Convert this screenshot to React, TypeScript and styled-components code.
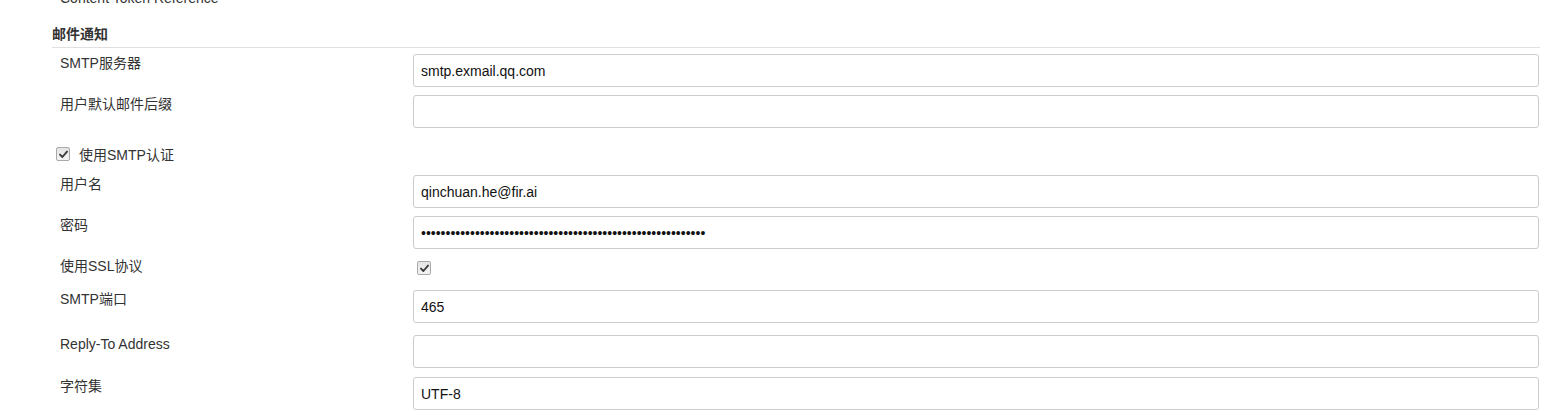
import React from "react";
import styled, { createGlobalStyle } from "styled-components";

const GlobalStyle = createGlobalStyle`
  html, body {
    margin: 0;
    padding: 0;
    background: #fff;
    overflow: hidden;
  }
  body {
    font-family: "Liberation Sans", Arial, "Noto Sans CJK SC", sans-serif;
    font-size: 14px;
    color: #333;
  }
`;

const fields = [
  { label: "SMTP服务器", value: "smtp.exmail.qq.com", gap: 6 },
  { label: "用户默认邮件后缀", value: "", gap: 8 },
];

const authFields = [
  { label: "用户名", value: "qinchuan.he@fir.ai", gap: 11 },
  { label: "密码", value: "•".repeat(58), gap: 8, password: true },
];

const tailFields = [
  { label: "SMTP端口", value: "465", gap: 8 },
  { label: "Reply-To Address", value: "", gap: 12 },
  { label: "字符集", value: "UTF-8", gap: 9 },
];

export default function App() {
  return (
    <>
      <GlobalStyle />
      <StyledPage>
        <StyledPrevLink>Content Token Reference</StyledPrevLink>
        <StyledSectionHeader>邮件通知</StyledSectionHeader>

        {fields.map((f) => (
          <FieldRow key={f.label} {...f} />
        ))}

        <StyledCheckRow $gap={18}>
          <CheckBox />
          <span className="checkLabel">使用SMTP认证</span>
        </StyledCheckRow>

        {authFields.map((f) => (
          <FieldRow key={f.label} {...f} />
        ))}

        <StyledRow $gap={8} $height={25}>
          <StyledLabel>使用SSL协议</StyledLabel>
          <StyledCheckCell>
            <CheckBox />
          </StyledCheckCell>
        </StyledRow>

        {tailFields.map((f) => (
          <FieldRow key={f.label} {...f} />
        ))}
      </StyledPage>
    </>
  );
}

type FieldProps = {
  label: string;
  value: string;
  gap: number;
  password?: boolean;
};

function FieldRow({ label, value, gap }: FieldProps) {
  return (
    <StyledRow $gap={gap}>
      <StyledLabel>{label}</StyledLabel>
      <StyledInput type="text" defaultValue={value} spellCheck={false} />
    </StyledRow>
  );
}

function CheckBox() {
  return (
    <StyledCheck>
      <svg width="9" height="9" viewBox="0 0 9 9">
        <path
          d="M1 4.6 L3.4 7 L8 1.6"
          fill="none"
          stroke="#3c3c3c"
          strokeWidth="1.9"
          strokeLinecap="round"
          strokeLinejoin="round"
        />
      </svg>
    </StyledCheck>
  );
}

const StyledPage = styled.main`
  width: 1541px;
  height: 418px;
  padding-left: 52px;
  box-sizing: border-box;
  overflow: hidden;
`;

const StyledPrevLink = styled.div`
  margin-top: -11px;
  padding-left: 8px;
  line-height: 18px;
  color: #333;
`;

const StyledSectionHeader = styled.h3`
  margin: 18px 1px 0 0;
  padding-bottom: 4px;
  line-height: 18px;
  font-size: 14px;
  font-weight: bold;
  color: #333;
  border-bottom: 1px solid #e0e0e0;
`;

const StyledRow = styled.div<{ $gap: number; $height?: number }>`
  display: flex;
  align-items: flex-start;
  margin-top: ${(p) => p.$gap}px;
  min-height: ${(p) => (p.$height ? `${p.$height}px` : "auto")};
`;

const StyledLabel = styled.div`
  width: 361px;
  flex-shrink: 0;
  box-sizing: border-box;
  padding-left: 8px;
  line-height: 18px;
  color: #333;
`;

const StyledInput = styled.input`
  width: 1126px;
  height: 33px;
  box-sizing: border-box;
  margin: 0;
  padding: 0 7px;
  border: 1px solid #ccc;
  border-radius: 3px;
  background: #fff;
  font-family: "Liberation Sans", Arial, sans-serif;
  font-size: 14px;
  color: #111;
  outline: none;
`;

const StyledCheckCell = styled.div`
  display: flex;
  padding: 3px 0 0 4px;
`;

const StyledCheckRow = styled.div<{ $gap: number }>`
  display: flex;
  align-items: flex-start;
  margin-top: ${(p) => p.$gap}px;
  padding-left: 4px;
  line-height: 18px;

  .checkLabel {
    margin-left: 9px;
    color: #333;
  }
`;

const StyledCheck = styled.span`
  display: inline-flex;
  align-items: center;
  justify-content: center;
  margin-top: 1px;
  width: 12px;
  height: 12px;
  border: 1px solid #a9a9a9;
  border-radius: 2px;
  background: linear-gradient(#e4e4e4, #f4f4f4);
  box-sizing: content-box;
  flex-shrink: 0;
`;
